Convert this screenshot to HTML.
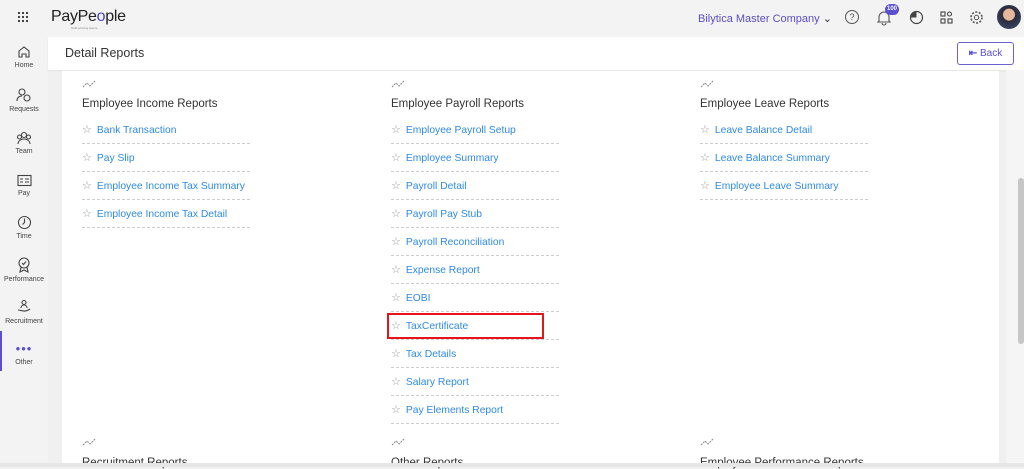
<!DOCTYPE html>
<html><head><meta charset="utf-8"><style>
*{margin:0;padding:0;box-sizing:border-box}
body{width:1024px;height:467px;overflow:hidden;background:#f0f0f0;font-family:"Liberation Sans",sans-serif;position:relative}
.top{position:absolute;left:0;top:0;width:1024px;height:37px;background:#f3f3f3}
.side{position:absolute;left:0;top:37px;width:48px;height:430px;background:#f3f3f3}
.nav{position:absolute;left:0;width:48px;text-align:center;font-size:7px;color:#444}
.nav svg{display:block;margin:0 auto 3px}
.hdr{position:absolute;left:48px;top:37px;width:976px;height:33px;background:#fff;box-shadow:0 1px 2px rgba(0,0,0,.06)}
.card{position:absolute;left:62px;top:71px;width:937px;height:396px;background:#fff}
.col{position:absolute;top:0}
.ic{position:absolute;left:0;width:14px;height:8px}
.t{position:absolute;left:0;font-size:11.5px;color:#333;white-space:nowrap}
.it{position:absolute;left:0;width:168px;height:28px;border-bottom:1px dashed #ccc;font-size:10.3px;color:#2f8ae6;white-space:nowrap;line-height:29px}
.it span.s{color:#999;font-size:11px;margin-right:5px}
.sb{position:absolute;left:1006px;top:70px;width:18px;height:397px;background:#f5f5f5}
.th{position:absolute;left:1018px;top:178px;width:6px;height:166px;background:#c6c6c6;border-radius:3px}
</style></head><body>
<div class="top">
 <div style="position:absolute;left:17px;top:11px;width:12px;height:12px;background:radial-gradient(circle,#444 1.1px,transparent 1.3px) 0 0/4px 4px"></div>
 <div style="position:absolute;left:51px;top:8px;font-size:16px;color:#222;letter-spacing:-.3px">PayPe<span style="color:#4a3fd6">o</span>ple</div>
 <div style="position:absolute;left:71px;top:26px;font-size:3px;color:#888">build winning teams</div>
 <div style="position:absolute;left:698px;top:12px;font-size:11px;color:#5b4fc4">Bilytica Master Company <span style="color:#333">⌄</span></div>
 <div style="position:absolute;left:845px;top:10px;width:14px;height:14px;border:1.2px solid #555;border-radius:50%;font-size:9px;text-align:center;line-height:12px;color:#555">?</div>
 <svg style="position:absolute;left:876px;top:9px" width="16" height="17" viewBox="0 0 16 17"><path d="M3 12V8a5 5 0 0110 0v4l1 1H2z M6 14a2 2 0 004 0" fill="none" stroke="#555" stroke-width="1.1"/></svg>
 <div style="position:absolute;left:885px;top:4px;width:14px;height:11px;background:#5a4fd0;border-radius:6px;color:#fff;font-size:6px;text-align:center;line-height:11px;font-weight:bold">100</div>
 <svg style="position:absolute;left:909px;top:10px" width="15" height="15" viewBox="0 0 15 15"><circle cx="7.5" cy="7.5" r="6" fill="none" stroke="#444" stroke-width="1.2"/><path d="M7.5 1.5V7.5H1.5A6 6 0 017.5 1.5z" fill="#444"/></svg>
 <svg style="position:absolute;left:940px;top:11px" width="13" height="13" viewBox="0 0 13 13" fill="none" stroke="#444" stroke-width="1.1"><rect x="1" y="1" width="4" height="4"/><circle cx="9.5" cy="3" r="2"/><rect x="1" y="8" width="4" height="4"/><rect x="8" y="8" width="4" height="4"/></svg>
 <svg style="position:absolute;left:969px;top:10px" width="15" height="15" viewBox="0 0 15 15"><circle cx="7.5" cy="7.5" r="2.2" fill="none" stroke="#555"/><circle cx="7.5" cy="7.5" r="5.5" fill="none" stroke="#555" stroke-dasharray="2 1.5" stroke-width="1.6"/></svg>
 <div style="position:absolute;left:997px;top:5px;width:24px;height:24px;border-radius:50%;background:radial-gradient(circle at 50% 40%,#e6b89a 30%,#2a2a3a 34%,#34405a 70%);"></div>
</div>
<div class="side">
 <div style="position:absolute;left:0;top:294px;width:2px;height:40px;background:#5a4fd0"></div>
 <div class="nav" style="top:8px"><svg width="14" height="14" viewBox="0 0 14 14" fill="none" stroke="#444" stroke-width="1.1"><path d="M2 6l5-4 5 4v6H9V9H5v3H2z"/></svg>Home</div>
 <div class="nav" style="top:50px"><svg width="16" height="16" viewBox="0 0 16 16" fill="none" stroke="#444" stroke-width="1.1"><circle cx="6" cy="5" r="3"/><path d="M1 14c0-4 3-5 5-5"/><circle cx="11" cy="11" r="3"/></svg>Requests</div>
 <div class="nav" style="top:94px"><svg width="16" height="14" viewBox="0 0 16 14" fill="none" stroke="#444" stroke-width="1.1"><circle cx="8" cy="4" r="2.5"/><circle cx="3.5" cy="6" r="2"/><circle cx="12.5" cy="6" r="2"/><path d="M2 13c0-3 3-5 6-5s6 2 6 5"/></svg>Team</div>
 <div class="nav" style="top:137px"><svg width="15" height="13" viewBox="0 0 15 13" fill="none" stroke="#444" stroke-width="1.1"><rect x="1" y="1.5" width="13" height="10"/><path d="M3 5h3M3 8h3M8 5h4M8 8h4"/></svg>Pay</div>
 <div class="nav" style="top:178px"><svg width="15" height="15" viewBox="0 0 15 15" fill="none" stroke="#444" stroke-width="1.1"><circle cx="7.5" cy="7.5" r="6"/><path d="M7.5 3.5v4l-2 2"/></svg>Time</div>
 <div class="nav" style="top:220px"><svg width="14" height="16" viewBox="0 0 14 16" fill="none" stroke="#444" stroke-width="1.1"><circle cx="7" cy="6" r="5"/><path d="M5 6l1.5 1.5L9 4.5M4 10l-1 5 4-2 4 2-1-5"/></svg>Performance</div>
 <div class="nav" style="top:262px"><svg width="16" height="16" viewBox="0 0 16 16" fill="none" stroke="#444" stroke-width="1.1"><circle cx="8" cy="3.5" r="2"/><path d="M5 9c0-2 1.5-3 3-3s3 1 3 3M2 11c4 0 6 3 12-1"/></svg>Recruitment</div>
 <div class="nav" style="top:308px;color:#444"><div style="color:#5a4fd0;font-size:13px;line-height:8px;letter-spacing:1px;margin-bottom:6px">•••</div>Other</div>
</div>
<div class="hdr">
 <div style="position:absolute;left:17px;top:9px;font-size:12.5px;color:#333">Detail Reports</div>
 <div style="position:absolute;left:909px;top:5px;width:57px;height:23px;border:1px solid #6b60d6;border-radius:3px;font-size:10px;color:#5a4fd0;text-align:center;line-height:21px"><b>⇤</b> Back</div>
</div>
<div class="card">
 <div class="col" style="left:20px">
  <svg class="ic" style="top:9px" viewBox="0 0 14 8"><path d="M1 7l4-4 3 3 5-5" fill="none" stroke="#888" stroke-width="1" stroke-dasharray="2 1"/></svg>
  <div class="t" style="top:27px">Employee Income Reports</div>
  <div class="it" style="top:45px"><span class="s">☆</span>Bank Transaction</div>
  <div class="it" style="top:73px"><span class="s">☆</span>Pay Slip</div>
  <div class="it" style="top:101px"><span class="s">☆</span>Employee Income Tax Summary</div>
  <div class="it" style="top:129px"><span class="s">☆</span>Employee Income Tax Detail</div>
  <svg class="ic" style="top:367px" viewBox="0 0 14 8"><path d="M1 7l4-4 3 3 5-5" fill="none" stroke="#888" stroke-width="1" stroke-dasharray="2 1"/></svg>
  <div class="t" style="top:386px">Recruitment Reports</div>
 </div>
 <div class="col" style="left:329px">
  <svg class="ic" style="top:9px" viewBox="0 0 14 8"><path d="M1 7l4-4 3 3 5-5" fill="none" stroke="#888" stroke-width="1" stroke-dasharray="2 1"/></svg>
  <div class="t" style="top:27px">Employee Payroll Reports</div>
  <div class="it" style="top:45px"><span class="s">☆</span>Employee Payroll Setup</div>
  <div class="it" style="top:73px"><span class="s">☆</span>Employee Summary</div>
  <div class="it" style="top:101px"><span class="s">☆</span>Payroll Detail</div>
  <div class="it" style="top:129px"><span class="s">☆</span>Payroll Pay Stub</div>
  <div class="it" style="top:157px"><span class="s">☆</span>Payroll Reconciliation</div>
  <div class="it" style="top:185px"><span class="s">☆</span>Expense Report</div>
  <div class="it" style="top:213px"><span class="s">☆</span>EOBI</div>
  <div class="it" style="top:241px"><span class="s">☆</span>TaxCertificate</div>
  <div style="position:absolute;left:-4px;top:242px;width:157px;height:26px;border:2px solid #e8141c"></div>
  <div class="it" style="top:269px"><span class="s">☆</span>Tax Details</div>
  <div class="it" style="top:297px"><span class="s">☆</span>Salary Report</div>
  <div class="it" style="top:325px"><span class="s">☆</span>Pay Elements Report</div>
  <svg class="ic" style="top:367px" viewBox="0 0 14 8"><path d="M1 7l4-4 3 3 5-5" fill="none" stroke="#888" stroke-width="1" stroke-dasharray="2 1"/></svg>
  <div class="t" style="top:386px">Other Reports</div>
 </div>
 <div class="col" style="left:638px">
  <svg class="ic" style="top:9px" viewBox="0 0 14 8"><path d="M1 7l4-4 3 3 5-5" fill="none" stroke="#888" stroke-width="1" stroke-dasharray="2 1"/></svg>
  <div class="t" style="top:27px">Employee Leave Reports</div>
  <div class="it" style="top:45px"><span class="s">☆</span>Leave Balance Detail</div>
  <div class="it" style="top:73px"><span class="s">☆</span>Leave Balance Summary</div>
  <div class="it" style="top:101px"><span class="s">☆</span>Employee Leave Summary</div>
  <svg class="ic" style="top:367px" viewBox="0 0 14 8"><path d="M1 7l4-4 3 3 5-5" fill="none" stroke="#888" stroke-width="1" stroke-dasharray="2 1"/></svg>
  <div class="t" style="top:386px">Employee Performance Reports</div>
 </div>
</div>
<div class="sb"></div><div class="th"></div>
<div style="position:absolute;left:0;top:463px;width:1024px;height:4px;background:#e6e6e6"></div>
</body></html>
